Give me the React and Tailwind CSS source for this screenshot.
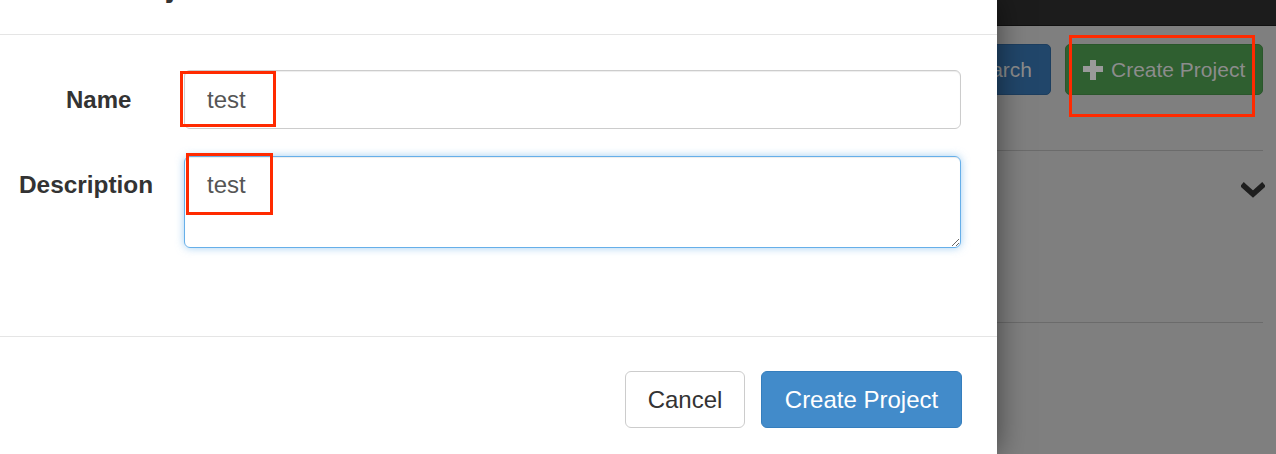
function PlusIcon() {
  return (
    <svg width="20" height="22" viewBox="0 0 20 22" className="shrink-0">
      <rect x="7" y="1" width="6" height="20" fill="#9a9a9a" />
      <rect x="0" y="7" width="20" height="6" fill="#9a9a9a" />
    </svg>
  )
}

function Chevron() {
  return (
    <svg width="24" height="16" viewBox="0 0 24 16" className="-mr-[2px]">
      <polyline points="3,4 12,12 21,4" fill="none" stroke="#1e1e1e" strokeWidth="5.5" strokeLinecap="square" />
    </svg>
  )
}

export default function App() {
  return (
    <div className="relative flex h-[454px] w-full overflow-hidden font-['Liberation_Sans',Arial,sans-serif]">
      {/* modal panel */}
      <div className="relative z-10 flex w-[997px] shrink-0 flex-col bg-white shadow-[0_0_28px_rgba(0,0,0,0.5)]">
        <div className="h-[35px] overflow-hidden border-b border-[#e5e5e5] px-[15px]">
          <h4 className="-mt-[28px] text-[30px] font-bold leading-[30px] text-[#333]">Create Project</h4>
        </div>

        <div className="h-[301px] pt-[35px]">
          <div className="flex">
            <label className="w-[184px] pl-[66px] text-[24px] font-bold leading-[59px] text-[#333]">Name</label>
            <input
              readOnly
              defaultValue="test"
              className="h-[59px] w-[777px] rounded-[6px] border border-[#ccc] pl-[22px] text-[24px] text-[#555] shadow-[inset_0_1px_1px_rgba(0,0,0,0.075)] outline-none"
            />
          </div>
          <div className="mt-[27px] flex">
            <label className="w-[184px] pl-[19px] pt-[12px] text-[24.4px] font-bold leading-[34px] text-[#333]">Description</label>
            <textarea
              readOnly
              defaultValue="test"
              className="h-[92px] w-[777px] rounded-[6px] border border-[#66afe9] px-[22px] pt-[11px] text-[24px] leading-[34px] text-[#555] shadow-[inset_0_1px_1px_rgba(0,0,0,0.075),0_0_8px_rgba(102,175,233,0.6)] outline-none"
            />
          </div>
        </div>

        <div className="flex justify-end gap-[16px] border-t border-[#e5e5e5] pr-[35px] pt-[34px]">
          <button className="h-[57px] w-[120px] rounded-[6px] border border-[#ccc] bg-white text-[24px] text-[#333]">
            Cancel
          </button>
          <button className="h-[57px] w-[201px] rounded-[6px] border border-[#357ebd] bg-[#428bca] text-[24px] text-white">
            Create Project
          </button>
        </div>
      </div>

      {/* page behind the backdrop */}
      <div className="flex min-w-0 flex-1 flex-col bg-[#7f7f7f]">
        <div className="h-[26px] border-b border-[#111] bg-[#1c1c1c]" />
        <div className="flex justify-end gap-[14px] overflow-hidden pr-[13px] pt-[18px]">
          <button className="h-[51px] shrink-0 rounded-[5px] border border-[#1d3e5f] bg-[#21466a] px-[18px] text-[21px] text-[#8c8c8c]">
            Search
          </button>
          <button className="flex h-[51px] w-[198px] shrink-0 items-center gap-[8px] rounded-[5px] border border-[#2a562b] bg-[#2f5f30] pl-[17px] text-[21px] text-[#8c8c8c]">
            <PlusIcon />
            Create Project
          </button>
        </div>
        <div className="mr-[13px] mt-[55px] flex h-[173px] justify-end border-y border-[#6b6b6b] pt-[31px]">
          <Chevron />
        </div>
      </div>

      {/* red annotation boxes */}
      <div className="pointer-events-none absolute left-[180px] top-[71px] z-20 h-[56px] w-[96px] border-[3px] border-[#ff2a00]" />
      <div className="pointer-events-none absolute left-[186px] top-[153px] z-20 h-[62px] w-[87px] border-[3px] border-[#ff2a00]" />
      <div className="pointer-events-none absolute left-[1069px] top-[35px] z-20 h-[82px] w-[186px] border-[3px] border-[#ff2a00]" />
    </div>
  )
}
